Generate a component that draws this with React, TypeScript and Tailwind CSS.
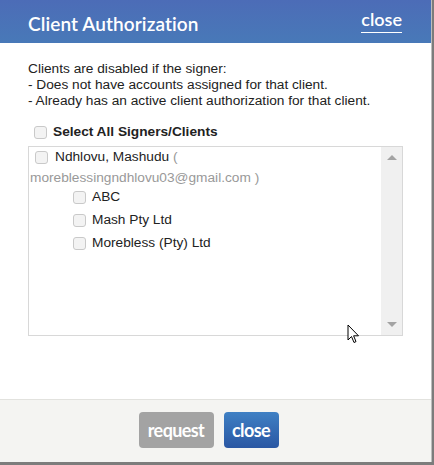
import * as React from 'react';

const clients = ['ABC', 'Mash Pty Ltd', 'Morebless (Pty) Ltd'];

function Box({ className = '' }: { className?: string }) {
  return (
    <span
      className={`inline-block h-[13px] w-[13px] shrink-0 rounded-[3px] border border-[#c9c9c9] bg-[#f3f3f3] ${className}`}
    />
  );
}

export default function App() {
  return (
    <div className="h-[465px] w-[434px] bg-[#7c7c7c]">
      <div className="relative flex h-[462px] w-[432px] flex-col border-r border-[#bdbdbd] bg-white">
        {/* header */}
        <div
          className="flex h-[43px] items-end justify-between bg-gradient-to-b from-[#4c6cb7] to-[#4879b8] pb-[10px] pl-[28px] pr-[29px] text-white"
          style={{ fontFamily: 'Lato, "Open Sans", sans-serif' }}
        >
          <span className="text-[19px] font-semibold leading-none tracking-[0.1px]">Client Authorization</span>
          <span className="border-b border-white pb-[4px] text-[18px] font-semibold leading-none">close</span>
        </div>

        {/* body */}
        <div
          className="flex-1 px-[28px] pt-[18px] text-[13.7px] text-[#222]"
          style={{ fontFamily: '"Liberation Sans", Arial, sans-serif' }}
        >
          <p className="leading-[16px]">
            Clients are disabled if the signer:
            <br />- Does not have accounts assigned for that client.
            <br />- Already has an active client authorization for that client.
          </p>

          <label className="mt-[15px] flex items-center gap-[6px] pl-[6px] font-bold leading-[16px]">
            <Box />
            Select All Signers/Clients
          </label>

          <div className="mt-[6px] flex h-[190px] w-[375px] border border-[#d8d8d8]">
            <div className="flex-1 pt-[2px]">
              <div className="flex items-center gap-[7px] pl-[6px] leading-[16px]">
                <Box />
                <span>
                  Ndhlovu, Mashudu <span className="text-[#999]">(</span>
                </span>
              </div>
              <div className="mt-[5px] pl-[1px] leading-[16px] text-[#999]">moreblessingndhlovu03@gmail.com )</div>
              <div className="mt-[3px] flex flex-col gap-[7px] pl-[44px]">
                {clients.map((c) => (
                  <div key={c} className="flex items-center gap-[6px] leading-[16px]">
                    <Box />
                    {c}
                  </div>
                ))}
              </div>
            </div>
            <div className="flex w-[21px] flex-col items-center justify-between bg-[#f0f0f0] py-[8px]">
              <span className="h-0 w-0 border-x-[5px] border-b-[5px] border-x-transparent border-b-[#a3a3a3]" />
              <span className="h-0 w-0 border-x-[5px] border-t-[5px] border-x-transparent border-t-[#a3a3a3]" />
            </div>
          </div>
        </div>

        {/* footer */}
        <div
          className="flex h-[63px] items-start justify-center gap-[10px] border-t border-[#e2e2de] bg-[#f4f4f2] pr-[14px] pt-[12px]"
          style={{ fontFamily: 'Lato, "Open Sans", sans-serif' }}
        >
          <button className="h-[36px] w-[75px] rounded-[4px] bg-[#a3a3a3] text-[18px] font-bold tracking-[-0.6px] text-white">
            request
          </button>
          <button className="h-[36px] w-[55px] rounded-[4px] bg-gradient-to-b from-[#3f80c4] to-[#2a57a3] text-[18px] font-bold tracking-[-0.6px] text-white">
            close
          </button>
        </div>

        {/* mouse pointer */}
        <svg className="absolute left-[347px] top-[324px]" width="13" height="20" viewBox="0 0 13 20">
          <path d="M1 1 L1 16 L4.5 12.5 L7 18.5 L9 17.6 L6.6 11.8 L11.5 11.8 Z" fill="#fff" stroke="#000" strokeWidth="1" strokeLinejoin="round" />
        </svg>
      </div>
    </div>
  );
}
